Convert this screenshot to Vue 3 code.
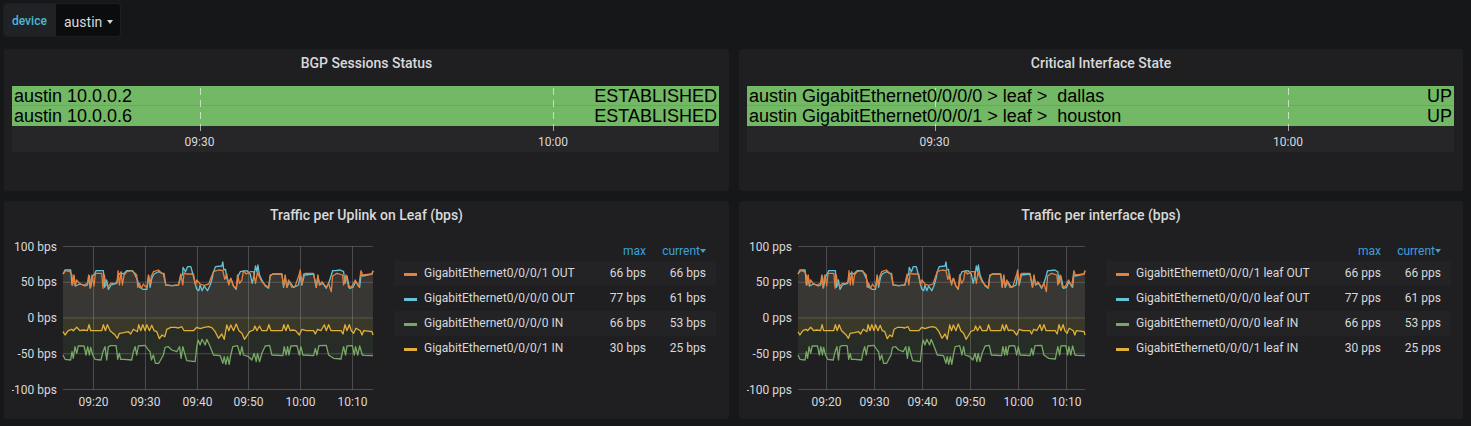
<script setup>
const orange = '189,222;197,212;210,215;216,225;218,255;222,225;226,258;230,240;238,250;250,255;262,250;266,225;270,265;276,225;282,258;286,220;305,220;309,265;313,225;318,255;325,258;332,250;345,250;351,245;354,212;358,255;363,215;367,255;372,225;380,215;395,212;405,220;410,225;413,262;418,250;424,265;430,252;434,258;440,262;445,225;449,255;454,228;460,215;475,210;485,220;492,220;497,255;515,257;535,255;542,222;548,255;552,218;558,222;580,222;586,255;590,240;600,252;612,256;626,252;632,235;640,215;655,210;668,212;674,238;680,222;686,255;692,235;700,258;708,265;712,225;718,250;725,240;730,212;738,222;750,215;760,215;766,250;772,215;775,225;785,245;795,255;805,262;810,225;818,222;845,222;850,260;855,225;860,262;865,240;875,262;885,258;897,222;900,210;905,255;910,222;915,220;940,220;948,262;953,225;958,255;965,245;978,262;985,250;993,275;997,228;1010,220;1027,225;1030,255;1037,225;1045,262;1055,258;1065,240;1075,260;1082,212;1087,225;1115,222;1118,212'
const blue = '189,222;195,210;212,210;216,255;222,228;226,258;240,252;255,258;262,255;268,228;272,262;278,228;284,222;288,212;310,212;314,262;320,240;325,268;333,255;350,250;355,225;362,218;370,222;380,212;398,212;405,225;412,240;418,262;428,268;440,268;446,228;450,262;456,232;462,222;475,215;490,222;497,255;515,257;535,255;542,228;547,225;549,202;556,215;562,200;572,200;578,222;586,255;590,268;596,272;600,255;606,272;612,258;622,272;630,255;636,235;640,215;646,200;665,198;668,186;671,210;676,208;680,235;686,250;692,235;700,258;708,268;714,228;720,215;740,212;750,222;756,250;762,225;766,198;770,215;773,195;778,225;785,240;795,258;805,265;810,228;818,222;845,222;850,262;855,228;860,262;868,245;880,262;895,255;900,222;905,255;912,225;940,222;948,262;953,228;958,255;968,250;978,265;985,250;990,235;997,212;1005,212;1020,210;1030,215;1034,250;1040,228;1048,265;1058,262;1066,245;1078,262;1082,225;1087,228;1115,222;1118,212'
const yellow = '189,395;195,405;205,392;215,388;220,392;230,382;240,392;250,390;262,392;267,374;272,392;305,392;310,374;316,392;322,374;330,392;345,405;352,415;358,400;372,398;385,395;392,402;400,388;412,395;416,374;422,392;428,374;435,392;440,374;448,392;455,376;462,392;470,395;478,416;486,405;494,410;500,388;512,382;525,382;535,384;545,380;552,392;580,392;590,382;600,386;612,382;625,380;635,383;645,395;655,415;665,402;672,418;680,375;686,392;692,375;700,392;708,372;716,392;725,400;733,418;742,405;748,395;760,390;764,378;770,392;778,378;785,392;800,392;806,374;812,392;846,392;851,374;857,392;863,374;870,392;878,390;886,392;897,405;905,388;918,392;940,392;945,402;952,388;962,392;972,374;978,392;985,374;992,392;1022,392;1028,402;1034,374;1040,392;1047,374;1053,392;1060,400;1067,385;1080,392;1085,405;1090,392;1115,395;1118,405'
const green = '189,465;195,478;212,480;216,455;220,475;225,440;230,460;235,438;252,438;258,465;263,440;268,465;272,442;278,465;285,478;303,480;309,455;315,440;320,480;325,440;332,437;348,437;353,478;358,460;362,478;372,478;395,480;400,455;405,440;410,465;415,438;435,436;445,450;450,455;454,480;460,465;466,490;476,490;490,465;495,442;505,440;515,450;530,455;538,440;543,475;548,440;555,465;560,482;585,485;590,440;594,420;600,435;606,418;615,435;620,418;630,440;640,465;660,467;668,490;672,470;677,493;682,470;687,493;692,465;698,440;712,437;720,465;725,440;730,465;745,470;755,480;762,460;768,485;772,460;778,485;785,460;795,438;808,436;815,465;848,467;852,440;858,465;862,440;866,465;872,438;890,437;897,465;902,440;908,465;940,467;945,445;950,465;956,437;978,436;985,465;1000,475;1022,477;1030,440;1036,465;1040,438;1056,437;1062,465;1066,440;1072,465;1078,438;1086,465;1092,466;1118,467'

const plotLeft = 51
const yOf = (v) => 10.5 + ((100 - v) / 200) * 143
const ticks = [
  { label: '09:20', at: 0.0977 },
  { label: '09:30', at: 0.2655 },
  { label: '09:40', at: 0.4332 },
  { label: '09:50', at: 0.5977 },
  { label: '10:00', at: 0.7655 },
  { label: '10:10', at: 0.9332 },
]

function linePoints(raw, width) {
  return raw.split(';').map((pair) => {
    const [x, y] = pair.split(',').map(Number)
    const px = plotLeft + ((x - 189) / 929) * width
    const py = 200 + y / 3 - 236
    return `${px.toFixed(1)},${py.toFixed(1)}`
  })
}

function areaPoints(raw, width) {
  const pts = linePoints(raw, width)
  const zero = yOf(0)
  return [`${plotLeft},${zero}`, ...pts, `${plotLeft + width},${zero}`].join(' ')
}

function makeChart(unit, width, svgWidth, names, title) {
  const colors = ['#E5813F', '#65C5D6', '#77A866', '#E0B03A']
  const raws = [orange, blue, green, yellow]
  const maxes = [66, 77, 66, 30]
  const currents = [66, 61, 53, 25]
  const series = names.map((name, i) => ({
    name,
    color: colors[i],
    line: linePoints(raws[i], width).join(' '),
    area: areaPoints(raws[i], width),
    max: `${maxes[i]} ${unit}`,
    current: `${currents[i]} ${unit}`,
  }))
  return {
    title,
    unit,
    width,
    svgWidth,
    series,
    drawOrder: [series[1], series[0], series[2], series[3]],
    yTicks: [100, 50, 0, -50, -100].map((v) => ({ v, y: yOf(v), label: `${v} ${unit}` })),
    xTicks: ticks.map((t) => ({ label: t.label, x: Math.round(plotLeft + t.at * width) + 0.5 })),
  }
}

const statusPanels = [
  {
    title: 'BGP Sessions Status',
    rows: [
      { name: 'austin 10.0.0.2', state: 'ESTABLISHED' },
      { name: 'austin 10.0.0.6', state: 'ESTABLISHED' },
    ],
  },
  {
    title: 'Critical Interface State',
    rows: [
      { name: 'austin GigabitEthernet0/0/0/0 > leaf >  dallas', state: 'UP' },
      { name: 'austin GigabitEthernet0/0/0/1 > leaf >  houston', state: 'UP' },
    ],
  },
]
const marks = [
  { label: '09:30', left: '187.5px' },
  { label: '10:00', left: '541px' },
]

const charts = [
  makeChart('bps', 310, 380, ['GigabitEthernet0/0/0/1 OUT', 'GigabitEthernet0/0/0/0 OUT', 'GigabitEthernet0/0/0/0 IN', 'GigabitEthernet0/0/0/1 IN'], 'Traffic per Uplink on Leaf (bps)'),
  makeChart('pps', 287, 357, ['GigabitEthernet0/0/0/1 leaf OUT', 'GigabitEthernet0/0/0/0 leaf OUT', 'GigabitEthernet0/0/0/0 leaf IN', 'GigabitEthernet0/0/0/1 leaf IN'], 'Traffic per interface (bps)'),
]
</script>

<template>
  <div class="page">
    <div class="toolbar">
      <span class="var-label">device</span>
      <span class="var-value">austin<i class="caret"></i></span>
    </div>
    <div class="grid">
      <section v-for="p in statusPanels" :key="p.title" class="panel status">
        <h2 class="title">{{ p.title }}</h2>
        <div class="discrete">
          <div v-for="r in p.rows" :key="r.name" class="bar">
            <span class="bar-text">{{ r.name }}</span>
            <span class="bar-text">{{ r.state }}</span>
          </div>
          <div class="axis">
            <span v-for="m in marks" :key="m.label" class="axis-label" :style="{ left: m.left }">{{ m.label }}</span>
          </div>
          <i v-for="m in marks" :key="m.label + 'x'" class="dash" :style="{ left: m.left }"></i>
        </div>
      </section>
      <section v-for="c in charts" :key="c.title" class="panel graph">
        <h2 class="title">{{ c.title }}</h2>
        <div class="graph-body">
          <svg class="chart" :width="c.svgWidth" height="174" :viewBox="`0 0 ${c.svgWidth} 174`">
            <line v-for="t in c.yTicks" :key="t.v" class="grid-line" :x1="plotLeft" :x2="plotLeft + c.width" :y1="t.y" :y2="t.y" />
            <line v-for="t in c.xTicks" :key="t.label" class="grid-line" :x1="t.x" :x2="t.x" :y1="yOf(100)" :y2="yOf(-100)" />
            <polygon v-for="s in c.drawOrder" :key="s.name + 'a'" :points="s.area" :fill="s.color" fill-opacity="0.1" />
            <polyline v-for="s in c.drawOrder" :key="s.name" :points="s.line" :stroke="s.color" class="series" />
            <text v-for="t in c.yTicks" :key="t.label" class="tick" text-anchor="end" :x="plotLeft - 6" :y="t.y + 4">{{ t.label }}</text>
            <text v-for="t in c.xTicks" :key="t.label + 'l'" class="tick" text-anchor="middle" :x="t.x" y="170">{{ t.label }}</text>
          </svg>
          <div class="legend">
            <div class="legend-head">
              <span class="col-max">max</span>
              <span class="col-cur">current<i class="sort"></i></span>
            </div>
            <div v-for="s in c.series" :key="s.name" class="legend-row">
              <i class="swatch" :style="{ background: s.color }"></i>
              <span class="legend-name">{{ s.name }}</span>
              <span class="col-max">{{ s.max }}</span>
              <span class="col-cur">{{ s.current }}</span>
            </div>
          </div>
        </div>
      </section>
    </div>
  </div>
</template>

<style>
html, body { margin: 0; background: #161719; }
</style>

<style scoped>
.page {
  width: 1471px;
  height: 426px;
  overflow: hidden;
  background: #161719;
  font-family: Roboto, "Liberation Sans", sans-serif;
  color: #d8d9da;
  box-sizing: border-box;
  padding: 3px 8px 0 4px;
}
.toolbar {
  display: flex;
  height: 34px;
  margin-left: -1px;
  margin-bottom: 12px;
}
.var-label {
  display: flex;
  align-items: center;
  width: 53px;
  box-sizing: border-box;
  padding: 2px 0 0 8px;
  background: #202226;
  border: 1px solid #1c1e21;
  border-right: 0;
  border-radius: 4px 0 0 4px;
  color: #4bb8d4;
  font-size: 12px;
  font-weight: 500;
}
.var-value {
  display: flex;
  align-items: center;
  width: 65px;
  box-sizing: border-box;
  padding: 4px 0 0 8px;
  background: #0b0c0e;
  border: 1px solid #1c1e21;
  border-left: 0;
  border-radius: 0 4px 4px 0;
  font-size: 14px;
  color: #d8d9da;
}
.caret {
  width: 0;
  height: 0;
  margin-left: 5px;
  border-left: 3.5px solid transparent;
  border-right: 3.5px solid transparent;
  border-top: 4px solid #d8d9da;
}
.grid {
  display: grid;
  grid-template-columns: 725px 724px;
  grid-template-rows: 142px 218px;
  column-gap: 10px;
  row-gap: 10px;
}
.panel {
  background: #1f1f21;
  border-radius: 3px;
  box-sizing: border-box;
  padding: 0 0 0 8px;
}
.title {
  margin: 0 0 0 -8px;
  height: 28px;
  line-height: 28px;
  text-align: center;
  font-size: 14px;
  font-weight: 500;
  color: #d8d9da;
}
.discrete {
  position: relative;
  margin-top: 9px;
  width: 707px;
  font-family: "Liberation Sans", Arial, sans-serif;
}
.bar {
  display: flex;
  justify-content: space-between;
  box-sizing: border-box;
  height: 20px;
  line-height: 20px;
  padding: 0 2px;
  background: #73b865;
  color: #000;
  font-size: 18px;
  white-space: pre;
}
.bar:first-child {
  border-bottom: 1px solid #6aa85f;
}
.bar-text {
  position: relative;
  z-index: 2;
}
.axis {
  position: relative;
  height: 26px;
  background: #262628;
}
.axis-label {
  position: absolute;
  top: 9px;
  transform: translateX(-50%);
  font-family: Roboto, "Liberation Sans", sans-serif;
  font-size: 12px;
  line-height: 14px;
  color: #d8d9da;
}
.dash {
  position: absolute;
  z-index: 1;
  top: 2px;
  width: 1px;
  height: 43px;
  background: repeating-linear-gradient(to bottom, rgba(255,255,255,.6) 0 7px, transparent 7px 12px);
}
.graph-body {
  display: flex;
  margin-top: 7px;
}
.chart { display: block; flex: none; }
.grid-line {
  stroke: rgba(255, 255, 255, 0.2);
  stroke-width: 1;
}
.series {
  fill: none;
  stroke-width: 1.3;
  stroke-linejoin: round;
}
.tick {
  fill: #d8d9da;
  font-family: Roboto, "Liberation Sans", sans-serif;
  font-size: 12px;
}
.legend {
  width: 322px;
  margin-left: 2px;
  font-size: 12px;
}
.graph:last-child .legend { width: 345px; }
.legend-head {
  display: flex;
  justify-content: flex-end;
  align-items: center;
  height: 25px;
  box-sizing: border-box;
  padding: 4px 10px 0 0;
  color: #3f9fd8;
}
.legend-row {
  display: flex;
  align-items: center;
  box-sizing: border-box;
  height: 25px;
  padding: 0 10px 1px 0;
  color: #d8d9da;
}
.legend-row:nth-child(even) { background: #232326; }
.swatch {
  flex: none;
  width: 13px;
  height: 3px;
  margin: 2px 7px 0 10px;
}
.legend-name { flex: 1; white-space: nowrap; }
.col-max { width: 60px; text-align: right; }
.col-cur { width: 60px; text-align: right; }
.sort {
  display: inline-block;
  width: 0;
  height: 0;
  vertical-align: middle;
  border-left: 3.5px solid transparent;
  border-right: 3.5px solid transparent;
  border-top: 4px solid #3f9fd8;
}
</style>
